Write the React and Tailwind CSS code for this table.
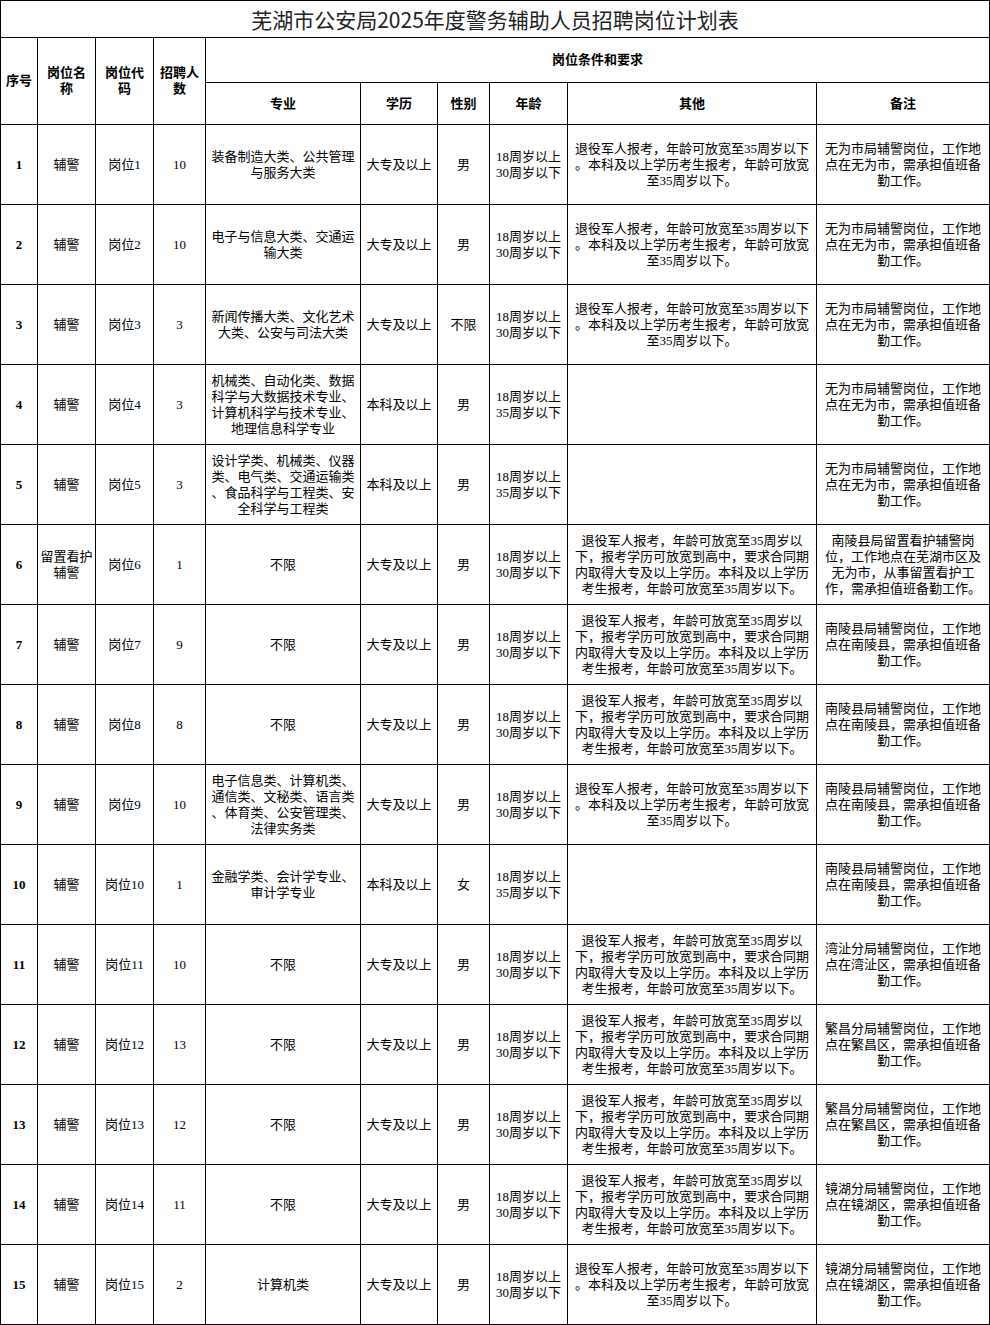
const otherA = ["退役军人报考，年龄可放宽至35周岁以下", "。本科及以上学历考生报考，年龄可放宽", "至35周岁以下。"];
const otherB = [
  "退役军人报考，年龄可放宽至35周岁以",
  "下，报考学历可放宽到高中，要求合同期",
  "内取得大专及以上学历。本科及以上学历",
  "考生报考，年龄可放宽至35周岁以下。",
];
const wuwei = ["无为市局辅警岗位，工作地", "点在无为市，需承担值班备", "勤工作。"];
const nanling = ["南陵县局辅警岗位，工作地", "点在南陵县，需承担值班备", "勤工作。"];
const wanzhi = ["湾沚分局辅警岗位，工作地", "点在湾沚区，需承担值班备", "勤工作。"];
const fanchang = ["繁昌分局辅警岗位，工作地", "点在繁昌区，需承担值班备", "勤工作。"];
const jinghu = ["镜湖分局辅警岗位，工作地", "点在镜湖区，需承担值班备", "勤工作。"];
const age30 = ["18周岁以上", "30周岁以下"];
const age35 = ["18周岁以上", "35周岁以下"];

const rows = [
  { no: 1, name: ["辅警"], code: "岗位1", num: "10", major: ["装备制造大类、公共管理", "与服务大类"], edu: "大专及以上", sex: "男", age: age30, other: otherA, note: wuwei },
  { no: 2, name: ["辅警"], code: "岗位2", num: "10", major: ["电子与信息大类、交通运", "输大类"], edu: "大专及以上", sex: "男", age: age30, other: otherA, note: wuwei },
  { no: 3, name: ["辅警"], code: "岗位3", num: "3", major: ["新闻传播大类、文化艺术", "大类、公安与司法大类"], edu: "大专及以上", sex: "不限", age: age30, other: otherA, note: wuwei },
  { no: 4, name: ["辅警"], code: "岗位4", num: "3", major: ["机械类、自动化类、数据", "科学与大数据技术专业、", "计算机科学与技术专业、", "地理信息科学专业"], edu: "本科及以上", sex: "男", age: age35, other: [], note: wuwei },
  { no: 5, name: ["辅警"], code: "岗位5", num: "3", major: ["设计学类、机械类、仪器", "类、电气类、交通运输类", "、食品科学与工程类、安", "全科学与工程类"], edu: "本科及以上", sex: "男", age: age35, other: [], note: wuwei },
  { no: 6, name: ["留置看护", "辅警"], code: "岗位6", num: "1", major: ["不限"], edu: "大专及以上", sex: "男", age: age30, other: otherB, note: ["南陵县局留置看护辅警岗", "位，工作地点在芜湖市区及", "无为市，从事留置看护工", "作，需承担值班备勤工作。"] },
  { no: 7, name: ["辅警"], code: "岗位7", num: "9", major: ["不限"], edu: "大专及以上", sex: "男", age: age30, other: otherB, note: nanling },
  { no: 8, name: ["辅警"], code: "岗位8", num: "8", major: ["不限"], edu: "大专及以上", sex: "男", age: age30, other: otherB, note: nanling },
  { no: 9, name: ["辅警"], code: "岗位9", num: "10", major: ["电子信息类、计算机类、", "通信类、文秘类、语言类", "、体育类、公安管理类、", "法律实务类"], edu: "大专及以上", sex: "男", age: age30, other: otherA, note: nanling },
  { no: 10, name: ["辅警"], code: "岗位10", num: "1", major: ["金融学类、会计学专业、", "审计学专业"], edu: "本科及以上", sex: "女", age: age35, other: [], note: nanling },
  { no: 11, name: ["辅警"], code: "岗位11", num: "10", major: ["不限"], edu: "大专及以上", sex: "男", age: age30, other: otherB, note: wanzhi },
  { no: 12, name: ["辅警"], code: "岗位12", num: "13", major: ["不限"], edu: "大专及以上", sex: "男", age: age30, other: otherB, note: fanchang },
  { no: 13, name: ["辅警"], code: "岗位13", num: "12", major: ["不限"], edu: "大专及以上", sex: "男", age: age30, other: otherB, note: fanchang },
  { no: 14, name: ["辅警"], code: "岗位14", num: "11", major: ["不限"], edu: "大专及以上", sex: "男", age: age30, other: otherB, note: jinghu },
  { no: 15, name: ["辅警"], code: "岗位15", num: "2", major: ["计算机类"], edu: "大专及以上", sex: "男", age: age30, other: otherA, note: jinghu },
];

function Lines({ lines }) {
  return lines.map((l, i) => (
    <div key={i} className="whitespace-nowrap">{l}</div>
  ));
}

const td = "border border-black text-center align-middle p-0";

export default function App() {
  return (
    <div className="bg-white w-[990px] text-black text-[13px] leading-4" style={{ fontFamily: '"Liberation Serif", "Noto Sans CJK SC", serif' }}>
      <table className="table-fixed border-collapse w-[989px]">
        <colgroup>
          <col className="w-[37px]" />
          <col className="w-[58px]" />
          <col className="w-[58px]" />
          <col className="w-[52px]" />
          <col className="w-[155px]" />
          <col className="w-[77px]" />
          <col className="w-[52px]" />
          <col className="w-[78px]" />
          <col className="w-[249px]" />
          <col className="w-[173px]" />
        </colgroup>
        <tbody>
          <tr className="h-[37px]">
            <td colSpan={10} className={`${td} text-[21px] text-[#222]`} style={{ fontFamily: '"Noto Sans CJK SC", sans-serif' }}>
              芜湖市公安局2025年度警务辅助人员招聘岗位计划表
            </td>
          </tr>
          <tr className="h-[45px] font-bold">
            <td rowSpan={2} className={td}>序号</td>
            <td rowSpan={2} className={td}>岗位名<br />称</td>
            <td rowSpan={2} className={td}>岗位代<br />码</td>
            <td rowSpan={2} className={td}>招聘人<br />数</td>
            <td colSpan={6} className={td}>岗位条件和要求</td>
          </tr>
          <tr className="h-[42px] font-bold">
            <td className={td}>专业</td>
            <td className={td}>学历</td>
            <td className={td}>性别</td>
            <td className={td}>年龄</td>
            <td className={td}>其他</td>
            <td className={td}>备注</td>
          </tr>
          {rows.map((r) => (
            <tr key={r.no} className="h-[80px]">
              <td className={`${td} font-bold`}>{r.no}</td>
              <td className={td}><Lines lines={r.name} /></td>
              <td className={td}>{r.code}</td>
              <td className={td}>{r.num}</td>
              <td className={td}><Lines lines={r.major} /></td>
              <td className={td}>{r.edu}</td>
              <td className={td}>{r.sex}</td>
              <td className={td}><Lines lines={r.age} /></td>
              <td className={td}><Lines lines={r.other} /></td>
              <td className={td}><Lines lines={r.note} /></td>
            </tr>
          ))}
        </tbody>
      </table>
    </div>
  );
}
